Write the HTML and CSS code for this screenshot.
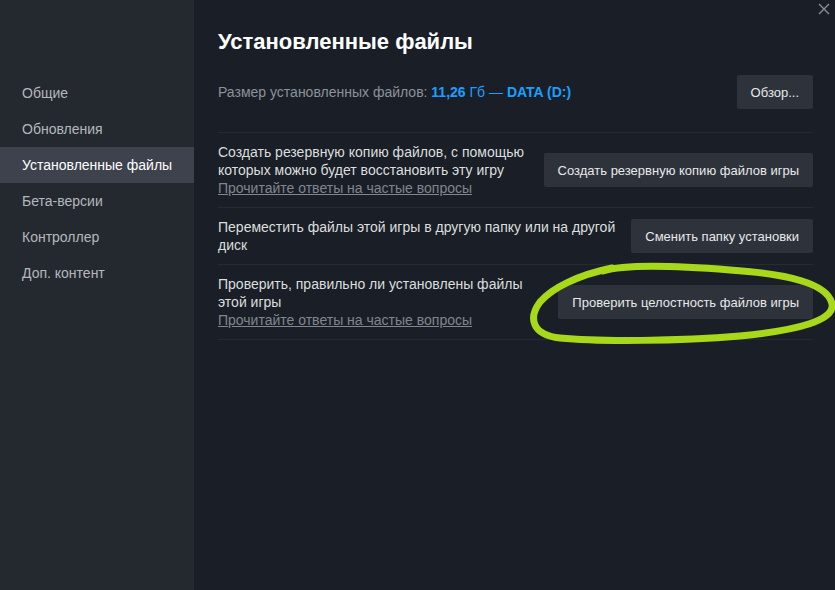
FILE: index.html
```html
<!DOCTYPE html>
<html lang="ru">
<head>
  <meta charset="UTF-8">
  <title>Свойства</title>
  <link rel="stylesheet" href="styles.css">
</head>
<body>
  <div class="sidebar">
    <a href="#" class="nav-item">Общие</a>
    <a href="#" class="nav-item">Обновления</a>
    <a href="#" class="nav-item selected">Установленные файлы</a>
    <a href="#" class="nav-item">Бета-версии</a>
    <a href="#" class="nav-item">Контроллер</a>
    <a href="#" class="nav-item">Доп. контент</a>
  </div>

  <div class="content">
    <button class="close" title="Закрыть">
      <svg width="12" height="12" viewBox="0 0 12 12"><path d="M1 1 L11 11 M11 1 L1 11" stroke="#8a9098" stroke-width="1.4"/></svg>
    </button>

    <h1>Установленные файлы</h1>

    <div class="size-row">
      <div class="size-text">Размер установленных файлов: <span class="hl"><b>11,26</b> Гб — <b>DATA (D:)</b></span></div>
      <button class="btn">Обзор...</button>
    </div>

    <div class="rows">
      <div class="row">
        <div class="row-text">
          Создать резервную копию файлов, с помощью которых можно будет восстановить эту игру
          <a href="#" class="faq">Прочитайте ответы на частые вопросы</a>
        </div>
        <button class="btn">Создать резервную копию файлов игры</button>
      </div>
      <div class="row">
        <div class="row-text">
          Переместить файлы этой игры в другую папку или на другой диск
        </div>
        <button class="btn">Сменить папку установки</button>
      </div>
      <div class="row">
        <div class="row-text">
          Проверить, правильно ли установлены файлы этой игры
          <a href="#" class="faq">Прочитайте ответы на частые вопросы</a>
        </div>
        <button class="btn">Проверить целостность файлов игры</button>
      </div>
    </div>
  </div>

  <!-- hand drawn marker around the verify button -->
  <svg class="marker" width="835" height="590" viewBox="0 0 835 590">
    <path d="M603 271 C625 264 680 266 730 270 C790 274 828 284 832 304 C835 320 800 330 740 336 C680 341 600 342 560 338 C532 335 528 318 540 302 C552 288 578 275 612 268"
      fill="none" stroke="#a8d81a" stroke-width="7" stroke-linecap="round"/>
  </svg>
</body>
</html>
```

FILE: styles.css
```css
body {
  margin: 0;
  height: 590px;
  display: flex;
  background-color: #1a1f27;
  font-family: "Liberation Sans", Arial, sans-serif;
  color: #dcdedf;
  overflow: hidden;
}

.sidebar {
  width: 194px;
  flex-shrink: 0;
  background-color: #24282f;
  padding-top: 75px;
  display: flex;
  flex-direction: column;
}

.nav-item {
  height: 36px;
  line-height: 36px;
  padding-left: 22px;
  font-size: 14px;
  color: #b4b8bd;
  text-decoration: none;
}

.nav-item.selected {
  background-color: #3d424d;
  color: #ffffff;
}

.content {
  flex: 1;
  position: relative;
  padding: 29px 22px 0 24px;
}

.close {
  position: absolute;
  top: 3px;
  right: 5px;
  background: none;
  border: none;
  padding: 0;
  cursor: pointer;
}

h1 {
  margin: 0 0 20px;
  font-size: 22px;
  line-height: 26px;
  font-weight: bold;
  color: #ffffff;
}

.size-row {
  display: flex;
  align-items: center;
  justify-content: space-between;
  margin-bottom: 23px;
}

.size-text {
  font-size: 14px;
  color: #8b929a;
}

.size-text .hl {
  color: #1a9fff;
}

.btn {
  flex-shrink: 0;
  height: 34px;
  padding: 0 14px;
  border: none;
  border-radius: 2px;
  background-color: #2d323b;
  color: #e8e9ea;
  font-family: "Liberation Sans", Arial, sans-serif;
  font-size: 13px;
  cursor: pointer;
}

.rows {
  border-top: 1px solid #262b33;
}

.row {
  display: flex;
  align-items: center;
  gap: 16px;
  padding: 10px 0;
  border-bottom: 1px solid #262b33;
}

.row-text {
  flex: 1;
  font-size: 14px;
  line-height: 18px;
  color: #dcdedf;
}

.faq {
  display: block;
  color: #80868e;
  text-decoration: underline;
}

.marker {
  position: absolute;
  top: 0;
  left: 0;
  pointer-events: none;
}
```
